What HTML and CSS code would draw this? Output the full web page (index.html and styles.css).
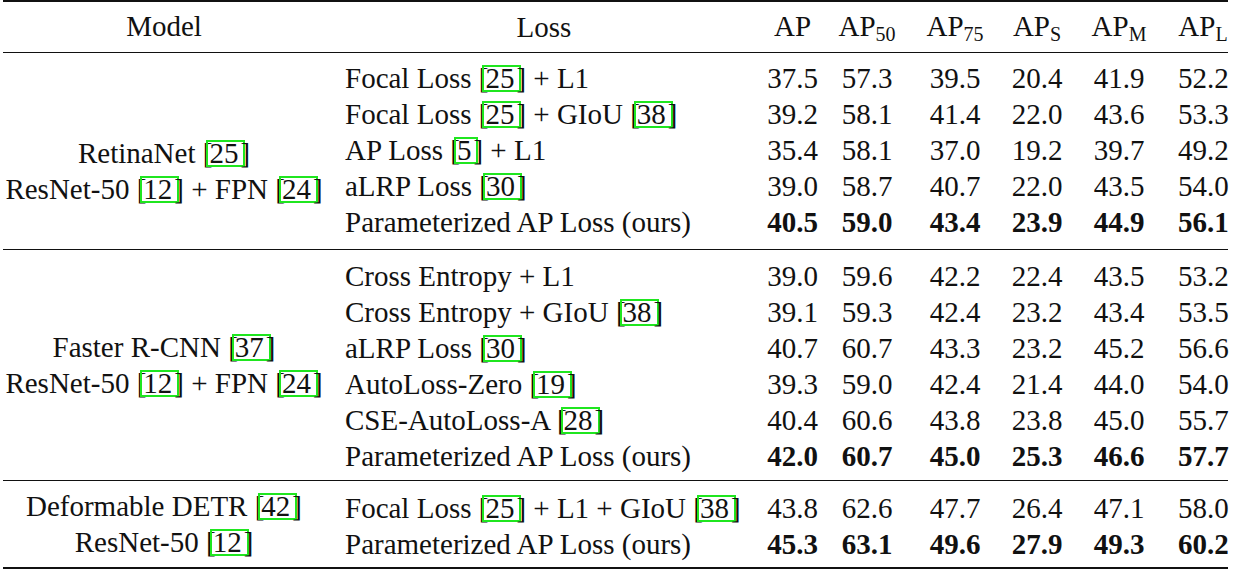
FILE: index.html
```html
<!DOCTYPE html>
<html>
<head>
<meta charset="utf-8">
<link rel="stylesheet" href="styles.css">
</head>
<body>
<table class="results">
  <colgroup>
    <col class="c-model"><col class="c-loss"><col class="c-ap"><col class="c-ap50"><col class="c-ap75"><col class="c-aps"><col class="c-apm"><col class="c-apl">
  </colgroup>
  <thead>
    <tr>
      <th class="model">Model</th>
      <th class="loss">Loss</th>
      <th>AP</th>
      <th>AP<sub>50</sub></th>
      <th>AP<sub>75</sub></th>
      <th>AP<sub>S</sub></th>
      <th>AP<sub>M</sub></th>
      <th class="last">AP<sub>L</sub></th>
    </tr>
  </thead>
  <tbody class="group g1">
    <tr class="first">
      <td class="model shifted" rowspan="5">RetinaNet [<span class="cite">25</span>]<br>ResNet-50 [<span class="cite">12</span>] + FPN [<span class="cite">24</span>]</td>
      <td class="loss">Focal Loss [<span class="cite">25</span>] + L1</td>
      <td>37.5</td><td>57.3</td><td>39.5</td><td>20.4</td><td>41.9</td><td class="last">52.2</td>
    </tr>
    <tr>
      <td class="loss">Focal Loss [<span class="cite">25</span>] + GIoU [<span class="cite">38</span>]</td>
      <td>39.2</td><td>58.1</td><td>41.4</td><td>22.0</td><td>43.6</td><td class="last">53.3</td>
    </tr>
    <tr>
      <td class="loss">AP Loss [<span class="cite">5</span>] + L1</td>
      <td>35.4</td><td>58.1</td><td>37.0</td><td>19.2</td><td>39.7</td><td class="last">49.2</td>
    </tr>
    <tr>
      <td class="loss">aLRP Loss [<span class="cite">30</span>]</td>
      <td>39.0</td><td>58.7</td><td>40.7</td><td>22.0</td><td>43.5</td><td class="last">54.0</td>
    </tr>
    <tr class="best lastrow">
      <td class="loss">Parameterized AP Loss (ours)</td>
      <td>40.5</td><td>59.0</td><td>43.4</td><td>23.9</td><td>44.9</td><td class="last">56.1</td>
    </tr>
  </tbody>
  <tbody class="group g2">
    <tr class="first">
      <td class="model" rowspan="6">Faster R-CNN [<span class="cite">37</span>]<br>ResNet-50 [<span class="cite">12</span>] + FPN [<span class="cite">24</span>]</td>
      <td class="loss">Cross Entropy + L1</td>
      <td>39.0</td><td>59.6</td><td>42.2</td><td>22.4</td><td>43.5</td><td class="last">53.2</td>
    </tr>
    <tr>
      <td class="loss">Cross Entropy + GIoU [<span class="cite">38</span>]</td>
      <td>39.1</td><td>59.3</td><td>42.4</td><td>23.2</td><td>43.4</td><td class="last">53.5</td>
    </tr>
    <tr>
      <td class="loss">aLRP Loss [<span class="cite">30</span>]</td>
      <td>40.7</td><td>60.7</td><td>43.3</td><td>23.2</td><td>45.2</td><td class="last">56.6</td>
    </tr>
    <tr>
      <td class="loss">AutoLoss-Zero [<span class="cite">19</span>]</td>
      <td>39.3</td><td>59.0</td><td>42.4</td><td>21.4</td><td>44.0</td><td class="last">54.0</td>
    </tr>
    <tr>
      <td class="loss">CSE-AutoLoss-A [<span class="cite">28</span>]</td>
      <td>40.4</td><td>60.6</td><td>43.8</td><td>23.8</td><td>45.0</td><td class="last">55.7</td>
    </tr>
    <tr class="best lastrow">
      <td class="loss">Parameterized AP Loss (ours)</td>
      <td>42.0</td><td>60.7</td><td>45.0</td><td>25.3</td><td>46.6</td><td class="last">57.7</td>
    </tr>
  </tbody>
  <tbody class="group g3">
    <tr class="first">
      <td class="model" rowspan="2">Deformable DETR [<span class="cite">42</span>]<br>ResNet-50 [<span class="cite">12</span>]</td>
      <td class="loss">Focal Loss [<span class="cite">25</span>] + L1 + GIoU [<span class="cite">38</span>]</td>
      <td>43.8</td><td>62.6</td><td>47.7</td><td>26.4</td><td>47.1</td><td class="last">58.0</td>
    </tr>
    <tr class="best lastrow">
      <td class="loss">Parameterized AP Loss (ours)</td>
      <td>45.3</td><td>63.1</td><td>49.6</td><td>27.9</td><td>49.3</td><td class="last">60.2</td>
    </tr>
  </tbody>
</table>
</body>
</html>
```
FILE: styles.css
```css
html, body {
  margin: 0;
  padding: 0;
  background: #ffffff;
}

.results {
  margin-left: 3px;
  width: 1225px;
  table-layout: fixed;
  border-collapse: collapse;
  font-family: "Liberation Serif", "Times New Roman", serif;
  font-size: 29px;
  line-height: 36px;
  color: #111111;
  border-top: 2.5px solid #111111;
  border-bottom: 2.5px solid #111111;
}

.c-model { width: 330px; }
.c-loss { width: 422px; }
.c-ap { width: 75px; }
.c-ap50 { width: 74px; }
.c-ap75 { width: 102px; }
.c-aps { width: 62px; }
.c-apm { width: 102px; }
.c-apl { width: 58px; }

.results th,
.results td {
  padding: 0;
  text-align: center;
  white-space: nowrap;
  font-weight: normal;
  vertical-align: middle;
}

.results thead th {
  padding-top: 6px;
  padding-bottom: 8px;
  border-bottom: 1.5px solid #111111;
}

.results .model {
  padding-right: 8px;
}

.results .loss {
  padding: 0 12px;
  text-align: left;
}

.results thead .loss {
  text-align: center;
}

.results .last {
  padding-left: 8px;
}

.results sub {
  font-size: 20px;
  line-height: 0;
  vertical-align: -4.5px;
}

.g1 tr.first td { padding-top: 7px; }
.g1 tr.lastrow td { padding-bottom: 9px; }
.g2 tr.first td { padding-top: 8px; }
.g2 tr.lastrow td { padding-bottom: 6px; }
.g3 tr.first td { padding-top: 9px; }
.g3 tr.lastrow td { padding-bottom: 5px; }

.results .group td.model {
  padding-top: 0;
  padding-bottom: 0;
}

.results .group td.model.shifted {
  padding-top: 40px;
}

.group {
  border-bottom: 1.5px solid #111111;
}

.group.g3 {
  border-bottom: none;
}

.best td {
  font-weight: bold;
}

.best td.loss {
  font-weight: normal;
}

.cite {
  display: inline-block;
  line-height: 23px;
  border: 2px solid #1fe61f;
  padding: 0 5px 0 1px;
  margin: 0 -5px 0 -6px;
}
```
